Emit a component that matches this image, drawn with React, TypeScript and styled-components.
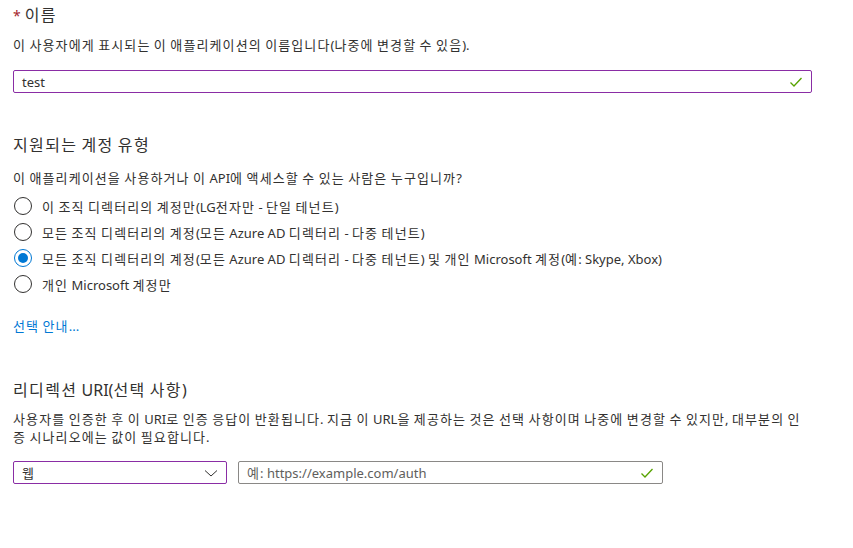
import React from 'react';
import styled, { createGlobalStyle } from 'styled-components';

const GlobalStyle = createGlobalStyle`
  html, body {
    margin: 0;
    padding: 0;
    background: #ffffff;
  }
  body {
    font-family: "Noto Sans", "Noto Sans CJK KR", sans-serif;
    color: #323130;
  }
`;

const Page = styled.div`
  padding: 4px 41px 40px 13px;
`;

const Section = styled.section<{ $top?: number }>`
  display: flex;
  flex-direction: column;
  margin-top: ${(p) => p.$top ?? 0}px;
`;

// hangul in the original font runs a bit wider than Noto CJK
const Hangul = styled.span`
  letter-spacing: 0.085em;
`;

const Ko = ({ children }: { children: string }) => (
  <>
    {children.split(/([\uAC00-\uD7A3]+)/).map((part, i) =>
      /[\uAC00-\uD7A3]/.test(part) ? <Hangul key={i}>{part}</Hangul> : part
    )}
  </>
);

const Heading = styled.h2`
  margin: 0;
  font-size: 16px;
  line-height: 22px;
  font-weight: 400;
  color: #323130;
`;

const Required = styled.span`
  color: #a4262c;
  margin-right: 4px;
  font-size: 14px;
`;

const Description = styled.p<{ $top: number }>`
  margin: ${(p) => p.$top}px 0 0 0;
  font-size: 13px;
  line-height: 18px;
  color: #323130;
`;

const Field = styled.div<{ $focused?: boolean; $width?: number }>`
  display: flex;
  align-items: center;
  box-sizing: border-box;
  height: 23px;
  width: ${(p) => (p.$width ? `${p.$width}px` : '100%')};
  padding: 0 8px 0 8px;
  border: 1px solid ${(p) => (p.$focused ? '#8a2da5' : '#8a8886')};
  border-radius: 2px;
  background: #ffffff;
  font-size: 13px;
  color: #323130;
`;

const FieldText = styled.span<{ $muted?: boolean }>`
  flex: 1;
  line-height: 18px;
  color: ${(p) => (p.$muted ? '#605e5c' : '#323130')};
`;

const ControlsRow = styled.div`
  display: flex;
  gap: 11px;
  margin-top: 15px;
`;

const InputWrap = styled.div`
  margin-top: 16px;
`;

const RadioList = styled.div`
  display: flex;
  flex-direction: column;
  margin-top: 6px;
`;

const RadioRow = styled.label`
  display: flex;
  align-items: center;
  height: 26px;
  font-size: 13px;
  color: #323130;
`;

const RadioCircle = styled.span<{ $checked?: boolean }>`
  display: flex;
  align-items: center;
  justify-content: center;
  box-sizing: border-box;
  width: 18px;
  height: 18px;
  margin: 0 10px 0 1px;
  border-radius: 50%;
  border: 1px solid ${(p) => (p.$checked ? '#0078d4' : '#323130')};

  &::after {
    content: '';
    display: ${(p) => (p.$checked ? 'block' : 'none')};
    width: 10px;
    height: 10px;
    border-radius: 50%;
    background: #0078d4;
  }
`;

const Link = styled.a`
  margin-top: 20px;
  font-size: 13px;
  line-height: 18px;
  color: #0078d4;
  text-decoration: none;
  cursor: pointer;
`;

const Check = () => (
  <svg width="14" height="12" viewBox="0 0 14 12" fill="none">
    <path d="M1.5 6.5 L5 10 L12.5 2" stroke="#57a300" strokeWidth="1.3" />
  </svg>
);

const Chevron = () => (
  <svg width="14" height="10" viewBox="0 0 14 10" fill="none">
    <path d="M1 2.5 L7 8 L13 2.5" stroke="#323130" strokeWidth="1" />
  </svg>
);

const accountTypes = [
  '이 조직 디렉터리의 계정만(LG전자만 - 단일 테넌트)',
  '모든 조직 디렉터리의 계정(모든 Azure AD 디렉터리 - 다중 테넌트)',
  '모든 조직 디렉터리의 계정(모든 Azure AD 디렉터리 - 다중 테넌트) 및 개인 Microsoft 계정(예: Skype, Xbox)',
  '개인 Microsoft 계정만',
];

const App = () => {
  const selected = 2;

  return (
    <>
      <GlobalStyle />
      <Page>
        <Section>
          <Heading>
            <Required>*</Required>
            <Ko>이름</Ko>
          </Heading>
          <Description $top={9}>
            <Ko>이 사용자에게 표시되는 이 애플리케이션의 이름입니다(나중에 변경할 수 있음).</Ko>
          </Description>
          <InputWrap>
            <Field $focused>
              <FieldText>test</FieldText>
              <Check />
            </Field>
          </InputWrap>
        </Section>

        <Section $top={41}>
          <Heading>
            <Ko>지원되는 계정 유형</Ko>
          </Heading>
          <Description $top={13}>
            <Ko>이 애플리케이션을 사용하거나 이 API에 액세스할 수 있는 사람은 누구입니까?</Ko>
          </Description>
          <RadioList>
            {accountTypes.map((label, i) => (
              <RadioRow key={label}>
                <RadioCircle $checked={i === selected} />
                <span>
                  <Ko>{label}</Ko>
                </span>
              </RadioRow>
            ))}
          </RadioList>
          <Link>
            <Ko>선택 안내...</Ko>
          </Link>
        </Section>

        <Section $top={44}>
          <Heading>
            <Ko>리디렉션 URI(선택 사항)</Ko>
          </Heading>
          <Description $top={9}>
            <Ko>사용자를 인증한 후 이 URI로 인증 응답이 반환됩니다. 지금 이 URL을 제공하는 것은 선택 사항이며 나중에 변경할 수 있지만, 대부분의 인증 시나리오에는 값이 필요합니다.</Ko>
          </Description>
          <ControlsRow>
            <Field $focused $width={214}>
              <FieldText>
                <Ko>웹</Ko>
              </FieldText>
              <Chevron />
            </Field>
            <Field $width={425}>
              <FieldText $muted>
                <Ko>예: https://example.com/auth</Ko>
              </FieldText>
              <Check />
            </Field>
          </ControlsRow>
        </Section>
      </Page>
    </>
  );
};

export default App;
